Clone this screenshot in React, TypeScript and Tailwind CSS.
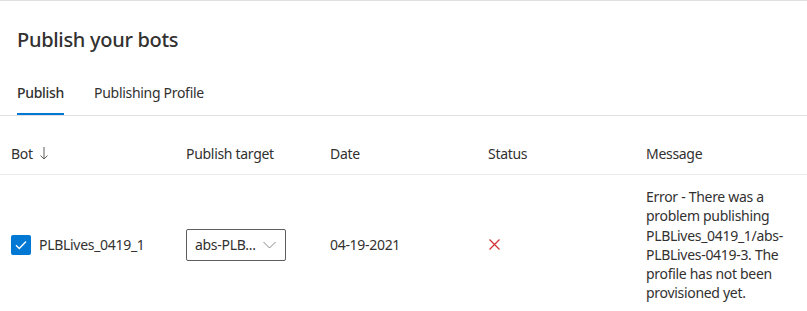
import React from 'react';

const messageLines = [
  'Error - There was a',
  'problem publishing',
  'PLBLives_0419_1/abs-',
  'PLBLives-0419-3. The',
  'profile has not been',
  'provisioned yet.',
];

export default function App() {
  return (
    <div className="w-[807px] h-[311px] overflow-hidden bg-white border-t border-[#e1dfdd] text-[#323130] font-['Noto_Sans',sans-serif] tracking-[-0.3px]">
      <h1 className="pl-[17px] pt-[25px] text-[20px] leading-[28px] font-medium">Publish your bots</h1>

      {/* Tabs */}
      <div className="mt-[17px] flex gap-[30px] pl-[17px] border-b border-[#e1dfdd]">
        <div className="h-[44px] flex items-center text-[14px] font-medium border-b-2 border-[#0078d4]">Publish</div>
        <div className="h-[44px] flex items-center text-[14px] border-b-2 border-transparent">Publishing Profile</div>
      </div>

      {/* Table */}
      <div className="pt-[16px] text-[14px]">
        <div className="grid grid-cols-[175px_144px_158px_158px_1fr] pl-[11px] h-[43px] items-center border-b border-[#edebe9]">
          <div className="flex items-center gap-[6px]">
            <span>Bot</span>
            <svg width="10" height="14" viewBox="0 0 10 14" fill="none" stroke="#605e5c" strokeWidth="1">
              <path d="M5 1v12M1.5 9.5L5 13l3.5-3.5" />
            </svg>
          </div>
          <div>Publish target</div>
          <div>Date</div>
          <div>Status</div>
          <div>Message</div>
        </div>

        <div className="grid grid-cols-[175px_144px_158px_158px_1fr] pl-[11px] pt-[12px] items-center">
          <div className="flex items-center gap-[8px]">
            <div className="w-[20px] h-[20px] rounded-[2px] bg-[#0078d4] flex items-center justify-center">
              <svg width="12" height="10" viewBox="0 0 12 10" fill="none" stroke="white" strokeWidth="1.4">
                <path d="M1 5.2l3.3 3.2L11 1.5" />
              </svg>
            </div>
            <span>PLBLives_0419_1</span>
          </div>
          <div>
            <div className="w-[100px] h-[32px] border border-[#605e5c] rounded-[2px] flex items-center justify-between pl-[8px] pr-[9px]">
              <span>abs-PLB...</span>
              <svg width="13" height="8" viewBox="0 0 13 8" fill="none" stroke="#8a8886" strokeWidth="1">
                <path d="M0.5 1l6 6 6-6" />
              </svg>
            </div>
          </div>
          <div>04-19-2021</div>
          <div className="pl-[1px]">
            <svg width="11" height="11" viewBox="0 0 11 11" fill="none" stroke="#d13438" strokeWidth="1.3">
              <path d="M0.5 0.5l10 10M10.5 0.5l-10 10" />
            </svg>
          </div>
          <div className="leading-[19.3px]">
            {messageLines.map((line) => (
              <div key={line} className="whitespace-nowrap">{line}</div>
            ))}
          </div>
        </div>
      </div>
    </div>
  );
}
